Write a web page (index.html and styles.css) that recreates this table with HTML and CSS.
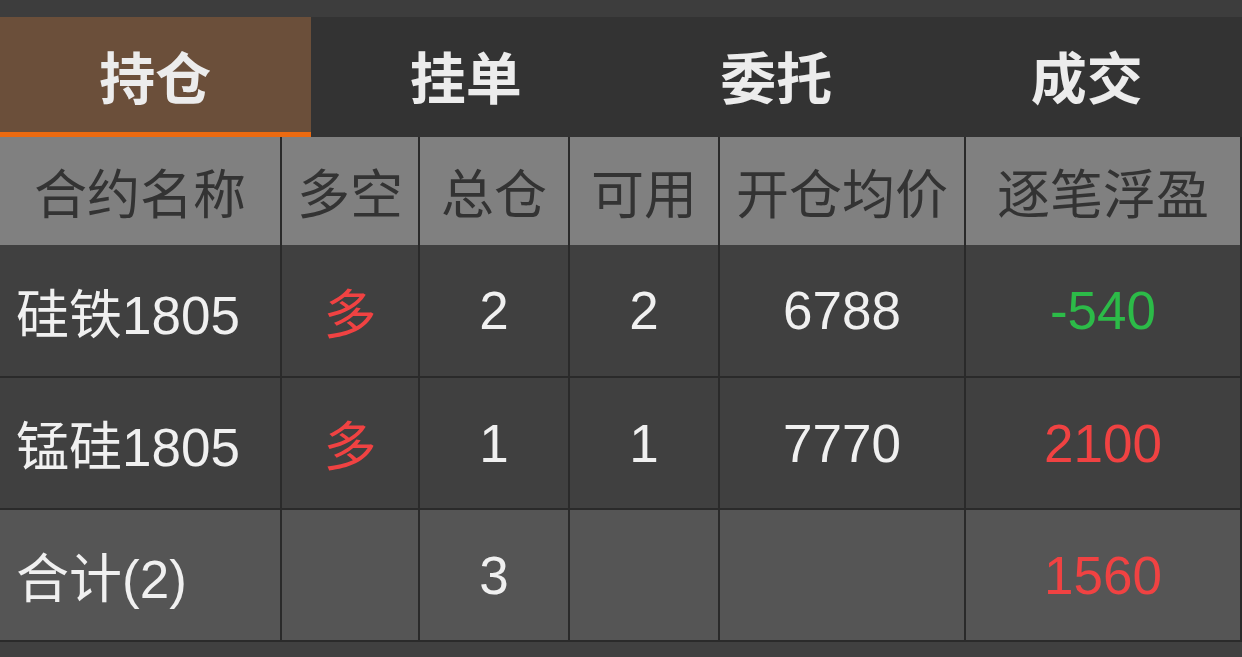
FILE: index.html
```html
<!DOCTYPE html>
<html lang="zh-CN">
<head>
<meta charset="utf-8">
<title>持仓</title>
<link rel="stylesheet" href="styles.css">
</head>
<body>
<div class="topbar"></div>
<nav class="tabs">
  <div class="tab active">持仓</div>
  <div class="tab">挂单</div>
  <div class="tab">委托</div>
  <div class="tab">成交</div>
</nav>
<section class="table">
  <div class="row head">
    <div class="cell">合约名称</div>
    <div class="cell">多空</div>
    <div class="cell">总仓</div>
    <div class="cell">可用</div>
    <div class="cell">开仓均价</div>
    <div class="cell">逐笔浮盈</div>
  </div>
  <div class="row data first">
    <div class="cell name">硅铁1805</div>
    <div class="cell red">多</div>
    <div class="cell">2</div>
    <div class="cell">2</div>
    <div class="cell">6788</div>
    <div class="cell green">-540</div>
  </div>
  <div class="row data">
    <div class="cell name">锰硅1805</div>
    <div class="cell red">多</div>
    <div class="cell">1</div>
    <div class="cell">1</div>
    <div class="cell">7770</div>
    <div class="cell red">2100</div>
  </div>
  <div class="row data total">
    <div class="cell name">合计(2)</div>
    <div class="cell"></div>
    <div class="cell">3</div>
    <div class="cell"></div>
    <div class="cell"></div>
    <div class="cell red">1560</div>
  </div>
</section>
</body>
</html>
```

FILE: styles.css
```css
html, body {
  margin: 0;
  padding: 0;
}
body {
  width: 1242px;
  height: 657px;
  overflow: hidden;
  background: #404040;
  font-family: "Liberation Sans", "Noto Sans CJK SC", sans-serif;
}
.topbar {
  height: 17px;
  background: #3d3d3d;
}
.tabs {
  display: flex;
  height: 120px;
  background: #333333;
}
.tab {
  flex: 1 1 0;
  display: flex;
  align-items: center;
  justify-content: center;
  color: #ececec;
  font-family: "Noto Sans CJK SC", sans-serif;
  font-size: 56px;
  font-weight: 700;
  box-sizing: border-box;
  border-bottom: 5px solid transparent;
}
.tab.active {
  background: #6b4f3a;
  border-bottom-color: #ec6a10;
}
.table {
  display: flex;
  flex-direction: column;
}
.row {
  display: grid;
  grid-template-columns: 280px 136px 148px 148px 244px 274px;
  column-gap: 2px;
  padding-right: 2px;
  background: #2a2a2a;
}
.cell {
  display: flex;
  align-items: center;
  justify-content: center;
  font-size: 53px;
  white-space: nowrap;
}
.head {
  height: 108px;
}
.head .cell {
  background: #808080;
  color: #333333;
}
.data {
  height: 130px;
  border-bottom: 2px solid #2a2a2a;
}
.data.first {
  height: 131px;
}
.data .cell {
  background: #404040;
  color: #f0f0f0;
}
.data.total .cell {
  background: #555555;
}
.data .cell.name {
  justify-content: flex-start;
  padding-left: 16px;
}
.data .cell.red {
  color: #f04242;
}
.data .cell.green {
  color: #2cbb48;
}
```
